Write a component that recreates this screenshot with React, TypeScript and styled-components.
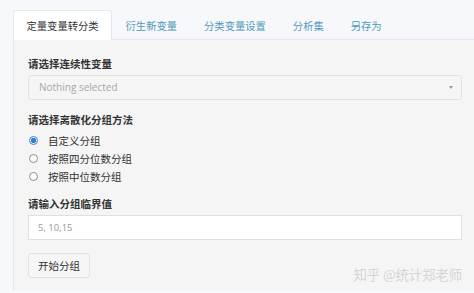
import styled, { createGlobalStyle } from "styled-components";

const GlobalStyle = createGlobalStyle`
  body {
    margin: 0;
    background: #f7f8fb;
    font-family: "Noto Sans CJK SC", "Noto Sans", sans-serif;
  }
`;

const Page = styled.div`
  position: relative;
  padding: 10px 0 3px 13px;
  width: 474px;
  height: 293px;
  box-sizing: border-box;
`;

const TabBar = styled.div`
  display: flex;
  height: 30px;
  border-bottom: 1px solid #e6e8ec;
  box-sizing: border-box;
`;

const Tab = styled.div<{ $active?: boolean }>`
  display: flex;
  align-items: center;
  padding: 0 12.5px;
  font-size: 10.3px;
  color: ${(p) => (p.$active ? "#333" : "#4f9aba")};
  background: ${(p) => (p.$active ? "#fff" : "transparent")};
  border: 1px solid ${(p) => (p.$active ? "#e6e8ec" : "transparent")};
  border-bottom: none;
  border-radius: 3px 3px 0 0;
  margin-bottom: ${(p) => (p.$active ? "-1px" : "0")};
  white-space: nowrap;
`;

const Panel = styled.div`
  background: #f5f5f5;
  border-left: 1px solid #e8e8e8;
  padding: 15px 12px 12px 14px;
  height: 250px;
  box-sizing: border-box;
  display: flex;
  flex-direction: column;
`;

const Label = styled.div<{ $gap?: number }>`
  font-size: 10.5px;
  font-weight: bold;
  color: #333;
  line-height: 17px;
  margin-top: ${(p) => p.$gap ?? 0}px;
  margin-bottom: 3px;
`;

const Select = styled.div`
  height: 25px;
  border: 1px solid #e2e2e2;
  border-radius: 3px;
  background: #f5f5f5;
  display: flex;
  align-items: center;
  justify-content: space-between;
  padding: 0 10px;
  box-sizing: border-box;
  font-family: "Open Sans", "Noto Sans", sans-serif;
  font-size: 10px;
  color: #a8a8a8;
`;

const Caret = styled.span`
  width: 0;
  height: 0;
  border-left: 2.5px solid transparent;
  border-right: 2.5px solid transparent;
  border-top: 3px solid #999;
  margin-right: -2px;
`;

const RadioRow = styled.label`
  display: flex;
  align-items: center;
  height: 18.5px;
  font-size: 10.5px;
  color: #333;
  padding-left: 1px;
`;

const RadioDot = styled.span<{ $checked?: boolean }>`
  width: 9px;
  height: 9px;
  border-radius: 50%;
  box-sizing: border-box;
  border: 1px solid ${(p) => (p.$checked ? "#3a86d6" : "#8d8d8d")};
  background: ${(p) =>
    p.$checked ? "radial-gradient(circle, #2f7fd0 0 2.5px, #fff 3px)" : "#fff"};
  margin-right: 10px;
`;

const Input = styled.div`
  height: 25px;
  border: 1px solid #e0e0e0;
  background: #fff;
  display: flex;
  align-items: center;
  padding: 0 9px;
  box-sizing: border-box;
  font-family: "Open Sans", "Noto Sans", sans-serif;
  font-size: 9.5px;
  color: #9a9a9a;
`;

const Button = styled.button`
  margin-top: 13px;
  align-self: flex-start;
  width: 62px;
  height: 25px;
  border: 1px solid #e2e2e2;
  border-radius: 3px;
  background: #f6f6f6;
  font-family: "Noto Sans CJK SC", sans-serif;
  font-size: 10.5px;
  color: #333;
  padding: 0;
`;

const Watermark = styled.div`
  position: absolute;
  right: 12px;
  top: 264px;
  font-size: 13.5px;
  color: #d6d6d6;
  letter-spacing: -0.2px;
`;

const tabs = ["定量变量转分类", "衍生新变量", "分类变量设置", "分析集", "另存为"];
const methods = ["自定义分组", "按照四分位数分组", "按照中位数分组"];

export default function App() {
  return (
    <Page>
      <GlobalStyle />
      <TabBar>
        {tabs.map((t, i) => (
          <Tab key={t} $active={i === 0}>
            {t}
          </Tab>
        ))}
      </TabBar>
      <Panel>
        <Label>请选择连续性变量</Label>
        <Select>
          Nothing selected
          <Caret />
        </Select>
        <Label $gap={11}>请选择离散化分组方法</Label>
        {methods.map((m, i) => (
          <RadioRow key={m}>
            <RadioDot $checked={i === 0} />
            {m}
          </RadioRow>
        ))}
        <Label $gap={9}>请输入分组临界值</Label>
        <Input>5, 10,15</Input>
        <Button>开始分组</Button>
      </Panel>
      <Watermark>知乎 @统计郑老师</Watermark>
    </Page>
  );
}
